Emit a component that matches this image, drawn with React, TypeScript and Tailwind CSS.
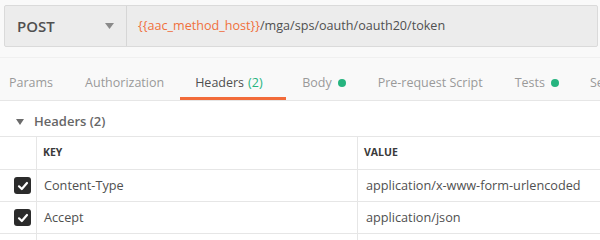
import React from 'react';

const font = { fontFamily: '"Open Sans", "Noto Sans", Arial, sans-serif' };

const Dot = () => <span className="inline-block w-[8px] h-[8px] rounded-full bg-[#26b47f] ml-[6px] mb-[1px]" />;

const Check = () => (
  <div className="w-[17px] h-[17px] rounded-[3px] bg-[#2b2b2b] flex items-center justify-center">
    <svg width="12" height="12" viewBox="0 0 12 12">
      <path d="M2 6.3 L4.8 9 L10 3" fill="none" stroke="#fff" strokeWidth="2.2" strokeLinecap="round" strokeLinejoin="round" />
    </svg>
  </div>
);

const App: React.FC = () => {
  const rows = [
    { key: 'Content-Type', value: 'application/x-www-form-urlencoded' },
    { key: 'Accept', value: 'application/json' },
  ];

  return (
    <div className="w-[600px] h-[240px] overflow-hidden bg-white" style={font}>
      {/* request bar */}
      <div className="bg-[#f9f9f9] pt-[5px] pb-[10px] pl-[4px] pr-[2px] border-b border-[#f0f0f0]">
        <div className="flex h-[42px] bg-[#ececec] border border-[#dadada] rounded-[2px]">
          <div className="w-[122px] flex items-center justify-between pl-[12px] pr-[12px] border-r border-[#d6d6d6]">
            <span className="text-[15px] font-semibold text-[#505050]">POST</span>
            <svg width="9" height="6" viewBox="0 0 9 6"><path d="M0 0 H9 L4.5 6 Z" fill="#8a8a8a" /></svg>
          </div>
          <div className="flex items-center pl-[11px] text-[12.6px] text-[#505050]">
            <span className="text-[#f0703c]">{'{{aac_method_host}}'}</span>
            <span>/mga/sps/oauth/oauth20/token</span>
          </div>
        </div>
      </div>

      {/* tabs */}
      <div className="bg-[#f9f9f9] h-[43px] flex items-end border-b border-[#e6e6e6] whitespace-nowrap text-[12.5px] text-[#9a9a9a]">
        <div className="flex items-center h-[41px] pl-[9px] pt-[7px]">
          <span>Params</span>
          <span className="ml-[32px]">Authorization</span>
          <div className="ml-[16px] h-full flex items-center pl-[15px] pt-[4px] border-b-[3px] border-[#f26b3a] text-[#505050] w-[106px]">
            Headers <span className="ml-[4px] text-[#26b47f]">(2)</span>
          </div>
          <span className="ml-[16px] flex items-center">Body<Dot /></span>
          <span className="ml-[32px]">Pre-request Script</span>
          <span className="ml-[32px] flex items-center">Tests<Dot /></span>
          <span className="ml-[31px]">Settings</span>
        </div>
      </div>

      {/* headers section title */}
      <div className="h-[35px] flex items-center pl-[16px] pt-[6px] text-[13px] font-semibold text-[#666666]">
        <svg width="8" height="6" viewBox="0 0 8 6" className="mr-[10px]"><path d="M0 0 H8 L4 6 Z" fill="#6b6b6b" /></svg>
        Headers (2)
      </div>

      {/* table */}
      <div className="border-t border-[#e6e6e6]">
        <div className="flex h-[33px] border-b border-[#e6e6e6]">
          <div className="w-[37px] border-r border-[#e6e6e6]" />
          <div className="w-[321px] border-r border-[#e6e6e6] flex items-center pl-[6px] text-[10.5px] font-bold text-[#3a3a3a]">KEY</div>
          <div className="flex-1 flex items-center pl-[6px] text-[10.5px] font-bold text-[#3a3a3a]">VALUE</div>
        </div>
        {rows.map((r) => (
          <div key={r.key} className="flex h-[32px] border-b border-[#e6e6e6]">
            <div className="w-[37px] border-r border-[#e6e6e6] flex items-center justify-end pr-[5px]"><Check /></div>
            <div className="w-[321px] border-r border-[#e6e6e6] flex items-center pl-[7px] text-[12.7px] text-[#505050]">{r.key}</div>
            <div className="flex-1 flex items-center pl-[8px] text-[12.7px] text-[#505050]">{r.value}</div>
          </div>
        ))}
        <div className="flex h-[20px]">
          <div className="w-[37px] border-r border-[#e6e6e6]" />
          <div className="w-[321px] border-r border-[#e6e6e6]" />
        </div>
      </div>
    </div>
  );
};

export default App;
